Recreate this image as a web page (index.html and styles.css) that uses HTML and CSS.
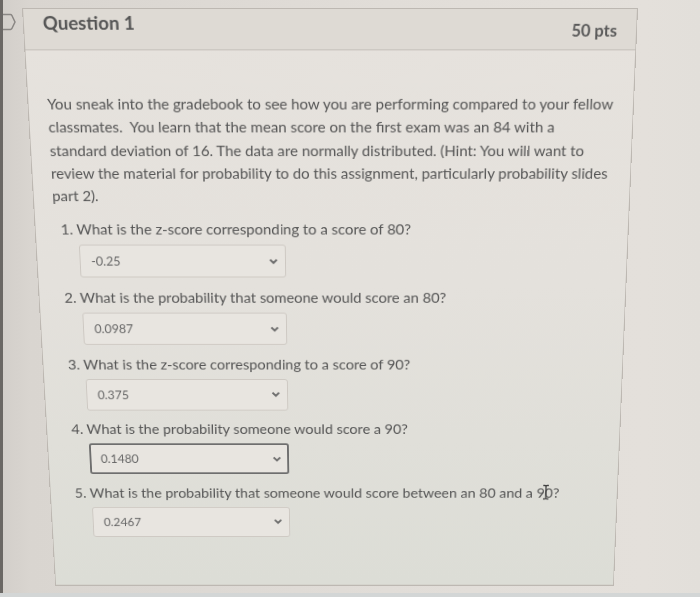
FILE: index.html
```html
<!DOCTYPE html>
<html lang="en">
<head>
<meta charset="utf-8">
<title>Question 1</title>
<link rel="stylesheet" href="styles.css">
</head>
<body>
<div class="screen">
  <div class="rail">
    <svg class="rail-icon" width="13" height="18" viewBox="0 0 13 18"><path d="M-2 1.5 H7.5 Q8.3 1.5 8.8 2.3 L12 9 L8.8 15.7 Q8.3 16.5 7.5 16.5 H-2" fill="none" stroke="#8a8784" stroke-width="1.5"/></svg>
  </div>
  <section class="card">
    <header class="card-head">
      <h2 class="title">Question 1</h2>
      <span class="pts">50 pts</span>
    </header>
    <div class="card-body">
      <p class="intro">You sneak into the gradebook to see how you are performing compared to your fellow<br>classmates.&nbsp; You learn that the mean score on the first exam was an 84 with a<br>standard deviation of 16. The data are normally distributed. (Hint: You will want to<br>review the material for probability to do this assignment, particularly probability slides<br>part 2).</p>
      <ol class="questions">
        <li class="q">
          <p class="q-text">1. What is the z-score corresponding to a score of 80?</p>
          <div class="select"><span>-0.25</span><svg class="chev" width="10" height="7" viewBox="0 0 10 7"><path d="M1.5 1.5 L5 5 L8.5 1.5" fill="none" stroke="#6c6c6c" stroke-width="2"/></svg></div>
        </li>
        <li class="q">
          <p class="q-text">2. What is the probability that someone would score an 80?</p>
          <div class="select"><span>0.0987</span><svg class="chev" width="10" height="7" viewBox="0 0 10 7"><path d="M1.5 1.5 L5 5 L8.5 1.5" fill="none" stroke="#6c6c6c" stroke-width="2"/></svg></div>
        </li>
        <li class="q">
          <p class="q-text">3. What is the z-score corresponding to a score of 90?</p>
          <div class="select"><span>0.375</span><svg class="chev" width="10" height="7" viewBox="0 0 10 7"><path d="M1.5 1.5 L5 5 L8.5 1.5" fill="none" stroke="#6c6c6c" stroke-width="2"/></svg></div>
        </li>
        <li class="q">
          <p class="q-text">4. What is the probability someone would score a 90?</p>
          <div class="select is-focused"><span>0.1480</span><svg class="chev" width="10" height="7" viewBox="0 0 10 7"><path d="M1.5 1.5 L5 5 L8.5 1.5" fill="none" stroke="#6c6c6c" stroke-width="2"/></svg></div>
        </li>
        <li class="q">
          <p class="q-text">5. What is the probability that someone would score between an 80 and a <span class="caret-word">90?<svg class="ibeam" width="8" height="19" viewBox="0 0 8 19"><path d="M1 1.5 H3 Q4 1.5 4 3 V16 Q4 17.5 3 17.5 H1 M7 1.5 H5 Q4 1.5 4 3 V16 Q4 17.5 5 17.5 H7" fill="none" stroke="#3d3d3d" stroke-width="1.3"/></svg></span></p>
          <div class="select"><span>0.2467</span><svg class="chev" width="10" height="7" viewBox="0 0 10 7"><path d="M1.5 1.5 L5 5 L8.5 1.5" fill="none" stroke="#6c6c6c" stroke-width="2"/></svg></div>
        </li>
      </ol>
    </div>
  </section>
</div>
</body>
</html>
```

FILE: styles.css
```css
body {
  margin: 0;
  background: #d3d6d6;
  font-family: Lato, "Noto Sans", "DejaVu Sans", sans-serif;
  color: #555;
}

.screen {
  box-sizing: border-box;
  height: 593px;
  padding-top: 8px;
  display: flex;
  align-items: flex-start;
  overflow: hidden;
  border-left: 3px solid #6b6865;
  background: linear-gradient(90deg, #d3cfca 0%, #d9d5d0 4%, #e1ddd8 55%, #e4e0db 92%, #e2dfda 100%);
}

.rail {
  flex: none;
  width: 19px;
}

.rail-icon {
  display: block;
  margin-top: 5px;
}

.card {
  flex: none;
  box-sizing: border-box;
  width: 616px;
  height: 642px;
  border: 1px solid #bdb8b2;
  background: linear-gradient(180deg, #e6e2dd 0%, #e4e1dc 45%, #dcddd6 100%);
  transform-origin: 308px 0;
  transform: skewX(0.45deg) perspective(800px) rotateX(-7.34deg);
}

.card-head {
  box-sizing: border-box;
  height: 42px;
  display: flex;
  justify-content: space-between;
  align-items: flex-start;
  padding: 3px 19px 0 19px;
  background: #dedad4;
  border-bottom: 1px solid #c3beb8;
}

.title {
  margin: 0;
  font-size: 18.6px;
  font-weight: 700;
  line-height: 1.2;
  color: #555;
}

.pts {
  margin-top: 10px;
  font-size: 16.5px;
  font-weight: 700;
  line-height: 1.2;
  color: #5a5a5a;
}

.card-body {
  padding: 43px 10px 0 19px;
}

.intro {
  margin: 0;
  font-size: 15.3px;
  line-height: 24.3px;
}

.questions {
  list-style: none;
  margin: 12px 0 0;
  padding: 0 0 0 7px;
}

.q {
  margin-bottom: 9.6px;
}

.q-text {
  margin: 0;
  font-size: 15.4px;
  line-height: 24px;
}

.caret-word {
  position: relative;
}

.ibeam {
  position: absolute;
  left: 6px;
  top: -1px;
}

.select {
  box-sizing: border-box;
  margin: 5px 0 0 18px;
  width: 215px;
  height: 36px;
  display: flex;
  align-items: center;
  justify-content: space-between;
  padding: 0 7px 0 11px;
  border: 1px solid #cdc8c2;
  border-radius: 3px;
  background: #e8e5e0;
  font-size: 13px;
  color: #666;
}

.select.is-focused {
  border: 2px solid #6e6e6e;
  padding: 0 6px 0 10px;
}

.chev {
  display: block;
}
```
